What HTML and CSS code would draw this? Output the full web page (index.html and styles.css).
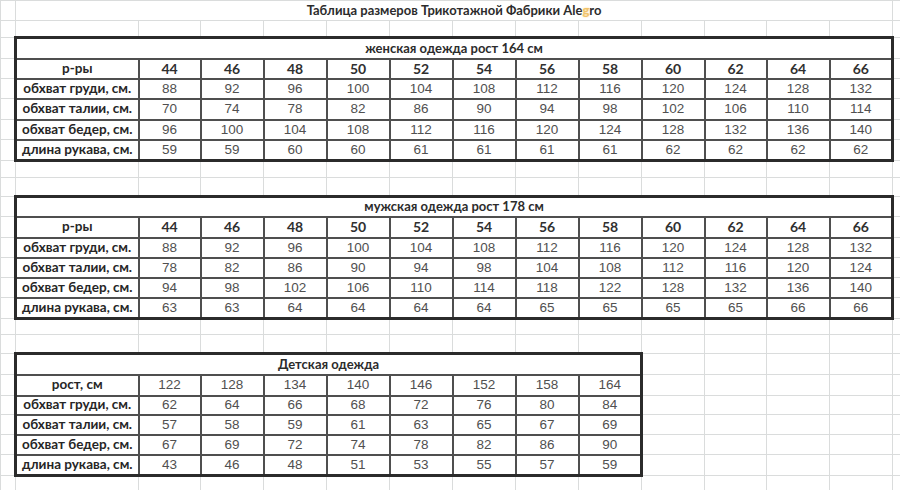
FILE: index.html
```html
<!DOCTYPE html>
<html lang="ru">
<head>
<meta charset="utf-8">
<title>Таблица размеров</title>
<link rel="stylesheet" href="styles.css">
</head>
<body>
<table class="sheet">
<colgroup>
<col class="w-rh"><col class="w-lbl">
<col class="w62"><col class="w63"><col class="w63"><col class="w63"><col class="w63"><col class="w63">
<col class="w63"><col class="w63"><col class="w63"><col class="w62"><col class="w63"><col class="w63">
<col class="w-fill">
</colgroup>
<tbody>
<tr class="h20"><td></td><td colspan="13" class="title">Таблица размеров Трикотажной Фабрики Ale<span class="cur">g</span>ro</td><td></td></tr>
<tr class="h17"><td></td><td></td><td></td><td></td><td></td><td></td><td></td><td></td><td></td><td></td><td></td><td></td><td></td><td></td><td></td></tr>

<tr class="h21 top"><td></td><td colspan="13" class="t head le re">женская одежда рост 164 см</td><td></td></tr>
<tr class="h20"><td></td><td class="t lbl le">р-ры</td><td class="t hn">44</td><td class="t hn">46</td><td class="t hn">48</td><td class="t hn">50</td><td class="t hn">52</td><td class="t hn">54</td><td class="t hn">56</td><td class="t hn">58</td><td class="t hn">60</td><td class="t hn">62</td><td class="t hn">64</td><td class="t hn re">66</td><td></td></tr>
<tr class="h20"><td></td><td class="t lbl le">обхват груди, см.</td><td class="t n">88</td><td class="t n">92</td><td class="t n">96</td><td class="t n">100</td><td class="t n">104</td><td class="t n">108</td><td class="t n">112</td><td class="t n">116</td><td class="t n">120</td><td class="t n">124</td><td class="t n">128</td><td class="t n re">132</td><td></td></tr>
<tr class="h21"><td></td><td class="t lbl le">обхват талии, см.</td><td class="t n">70</td><td class="t n">74</td><td class="t n">78</td><td class="t n">82</td><td class="t n">86</td><td class="t n">90</td><td class="t n">94</td><td class="t n">98</td><td class="t n">102</td><td class="t n">106</td><td class="t n">110</td><td class="t n re">114</td><td></td></tr>
<tr class="h20"><td></td><td class="t lbl le">обхват бедер, см.</td><td class="t n">96</td><td class="t n">100</td><td class="t n">104</td><td class="t n">108</td><td class="t n">112</td><td class="t n">116</td><td class="t n">120</td><td class="t n">124</td><td class="t n">128</td><td class="t n">132</td><td class="t n">136</td><td class="t n re">140</td><td></td></tr>
<tr class="h21 bot"><td></td><td class="t lbl le">длина рукава, см.</td><td class="t n">59</td><td class="t n">59</td><td class="t n">60</td><td class="t n">60</td><td class="t n">61</td><td class="t n">61</td><td class="t n">61</td><td class="t n">61</td><td class="t n">62</td><td class="t n">62</td><td class="t n">62</td><td class="t n re">62</td><td></td></tr>

<tr class="h17"><td></td><td></td><td></td><td></td><td></td><td></td><td></td><td></td><td></td><td></td><td></td><td></td><td></td><td></td><td></td></tr>
<tr class="h19"><td></td><td></td><td></td><td></td><td></td><td></td><td></td><td></td><td></td><td></td><td></td><td></td><td></td><td></td><td></td></tr>

<tr class="h20 top"><td></td><td colspan="13" class="t head le re">мужская одежда рост 178 см</td><td></td></tr>
<tr class="h21"><td></td><td class="t lbl le">р-ры</td><td class="t hn">44</td><td class="t hn">46</td><td class="t hn">48</td><td class="t hn">50</td><td class="t hn">52</td><td class="t hn">54</td><td class="t hn">56</td><td class="t hn">58</td><td class="t hn">60</td><td class="t hn">62</td><td class="t hn">64</td><td class="t hn re">66</td><td></td></tr>
<tr class="h20"><td></td><td class="t lbl le">обхват груди, см.</td><td class="t n">88</td><td class="t n">92</td><td class="t n">96</td><td class="t n">100</td><td class="t n">104</td><td class="t n">108</td><td class="t n">112</td><td class="t n">116</td><td class="t n">120</td><td class="t n">124</td><td class="t n">128</td><td class="t n re">132</td><td></td></tr>
<tr class="h20"><td></td><td class="t lbl le">обхват талии, см.</td><td class="t n">78</td><td class="t n">82</td><td class="t n">86</td><td class="t n">90</td><td class="t n">94</td><td class="t n">98</td><td class="t n">104</td><td class="t n">108</td><td class="t n">112</td><td class="t n">116</td><td class="t n">120</td><td class="t n re">124</td><td></td></tr>
<tr class="h20"><td></td><td class="t lbl le">обхват бедер, см.</td><td class="t n">94</td><td class="t n">98</td><td class="t n">102</td><td class="t n">106</td><td class="t n">110</td><td class="t n">114</td><td class="t n">118</td><td class="t n">122</td><td class="t n">128</td><td class="t n">132</td><td class="t n">136</td><td class="t n re">140</td><td></td></tr>
<tr class="h21 bot"><td></td><td class="t lbl le">длина рукава, см.</td><td class="t n">63</td><td class="t n">63</td><td class="t n">64</td><td class="t n">64</td><td class="t n">64</td><td class="t n">64</td><td class="t n">65</td><td class="t n">65</td><td class="t n">65</td><td class="t n">65</td><td class="t n">66</td><td class="t n re">66</td><td></td></tr>

<tr class="h16"><td></td><td></td><td></td><td></td><td></td><td></td><td></td><td></td><td></td><td></td><td></td><td></td><td></td><td></td><td></td></tr>
<tr class="h19"><td></td><td></td><td></td><td></td><td></td><td></td><td></td><td></td><td></td><td></td><td></td><td></td><td></td><td></td><td></td></tr>

<tr class="h21 top"><td></td><td colspan="9" class="t head le re">Детская одежда</td><td></td><td></td><td></td><td></td><td></td></tr>
<tr class="h21"><td></td><td class="t lbl le">рост, см</td><td class="t n">122</td><td class="t n">128</td><td class="t n">134</td><td class="t n">140</td><td class="t n">146</td><td class="t n">152</td><td class="t n">158</td><td class="t n re">164</td><td></td><td></td><td></td><td></td><td></td></tr>
<tr class="h19"><td></td><td class="t lbl le">обхват груди, см.</td><td class="t n">62</td><td class="t n">64</td><td class="t n">66</td><td class="t n">68</td><td class="t n">72</td><td class="t n">76</td><td class="t n">80</td><td class="t n re">84</td><td></td><td></td><td></td><td></td><td></td></tr>
<tr class="h20"><td></td><td class="t lbl le">обхват талии, см.</td><td class="t n">57</td><td class="t n">58</td><td class="t n">59</td><td class="t n">61</td><td class="t n">63</td><td class="t n">65</td><td class="t n">67</td><td class="t n re">69</td><td></td><td></td><td></td><td></td><td></td></tr>
<tr class="h20"><td></td><td class="t lbl le">обхват бедер, см.</td><td class="t n">67</td><td class="t n">69</td><td class="t n">72</td><td class="t n">74</td><td class="t n">78</td><td class="t n">82</td><td class="t n">86</td><td class="t n re">90</td><td></td><td></td><td></td><td></td><td></td></tr>
<tr class="h21 bot"><td></td><td class="t lbl le">длина рукава, см.</td><td class="t n">43</td><td class="t n">46</td><td class="t n">48</td><td class="t n">51</td><td class="t n">53</td><td class="t n">55</td><td class="t n">57</td><td class="t n re">59</td><td></td><td></td><td></td><td></td><td></td></tr>

<tr class="h16"><td></td><td></td><td></td><td></td><td></td><td></td><td></td><td></td><td></td><td></td><td></td><td></td><td></td><td></td><td></td></tr>
</tbody>
</table>
</body>
</html>
```

FILE: styles.css
```css
html, body {
  margin: 0;
  padding: 0;
  background: #ffffff;
}

.sheet {
  width: 900px;
  table-layout: fixed;
  border-collapse: collapse;
  font-family: "Liberation Sans", Arial, sans-serif;
  font-size: 13.5px;
  color: #4a4a4a;
}

.w-rh { width: 15px; }
.w-lbl { width: 123px; }
.w62 { width: 62px; }
.w63 { width: 63px; }
.w-fill { width: 8px; }

.sheet td {
  border: 1px solid #dadcdc;
  padding: 0;
  text-align: center;
  vertical-align: middle;
  line-height: 1;
  overflow: hidden;
  white-space: nowrap;
}

.h16 { height: 16px; }
.h17 { height: 17px; }
.h19 { height: 19px; }
.h20 { height: 20px; }
.h21 { height: 21px; }

.sheet td.title {
  border-top: 1px solid #dadcdc;
  border-left: none;
  border-right: none;
  font-family: Lato, "Open Sans", sans-serif;
  font-weight: 700;
  font-size: 13px;
  color: #2c2c2c;
}

.cur {
  color: #f1c36a;
  text-shadow: 0 0 2px #f7d89a;
}

.sheet td.t {
  border: 2px solid #4f4f4f;
}

.sheet tr.top td.t { border-top: 3px solid #2b2b2b; }
.sheet tr.bot td.t { border-bottom: 3px solid #2b2b2b; }
.sheet td.t.le { border-left: 3px solid #2b2b2b; }
.sheet td.t.re { border-right: 3px solid #2b2b2b; }

.sheet td.head {
  font-family: Lato, "Open Sans", sans-serif;
  font-weight: 700;
  font-size: 13px;
  color: #2c2c2c;
}

.sheet td.lbl {
  font-family: Lato, "Open Sans", sans-serif;
  font-weight: 700;
  font-size: 13.5px;
  color: #262626;
}

.sheet td.hn {
  font-family: Lato, "Open Sans", sans-serif;
  font-weight: 700;
  font-size: 14px;
  color: #303030;
}

.sheet td.n {
  color: #505050;
}
```
